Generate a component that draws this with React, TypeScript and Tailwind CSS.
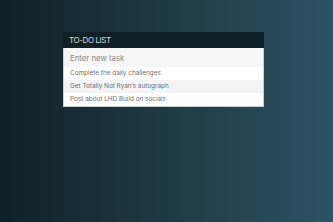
import React from 'react';

const tasks = [
  'Complete the daily challenges',
  'Get Totally Not Ryan\u2019s autograph',
  'Post about LHD Build on socials',
];

const App: React.FC = () => {
  return (
    <div
      className="w-[333px] h-[222px] bg-gradient-to-r from-[#0f2027] via-[#203a43] to-[#2c5364] pt-[32px] pl-[63px]"
      style={{ fontFamily: 'Inter, "Noto Sans", sans-serif' }}
    >
      <div className="w-[201px] border border-[#c9ced1] bg-white">
        <div className="h-[16px] bg-[#0f2027] flex items-center pl-[6px] -mx-px -mt-px">
          <span className="text-[8px] text-[#d6dadc] tracking-[-0.4px] leading-none">TO-DO LIST</span>
        </div>
        <input
          className="block w-full h-[19px] bg-[#f6f6f6] pl-[6px] text-[7.8px] text-[#555] placeholder-[#8a8a8a] outline-none"
          placeholder="Enter new task"
        />
        <ul>
          {tasks.map((t, i) => (
            <li
              key={t}
              className={`h-[13px] flex items-center pl-[6px] text-[6.4px] text-[#707070] ${
                i % 2 === 1 ? 'bg-[#f4f4f4]' : 'bg-white'
              }`}
            >
              {t}
            </li>
          ))}
        </ul>
      </div>
    </div>
  );
};

export default App;
